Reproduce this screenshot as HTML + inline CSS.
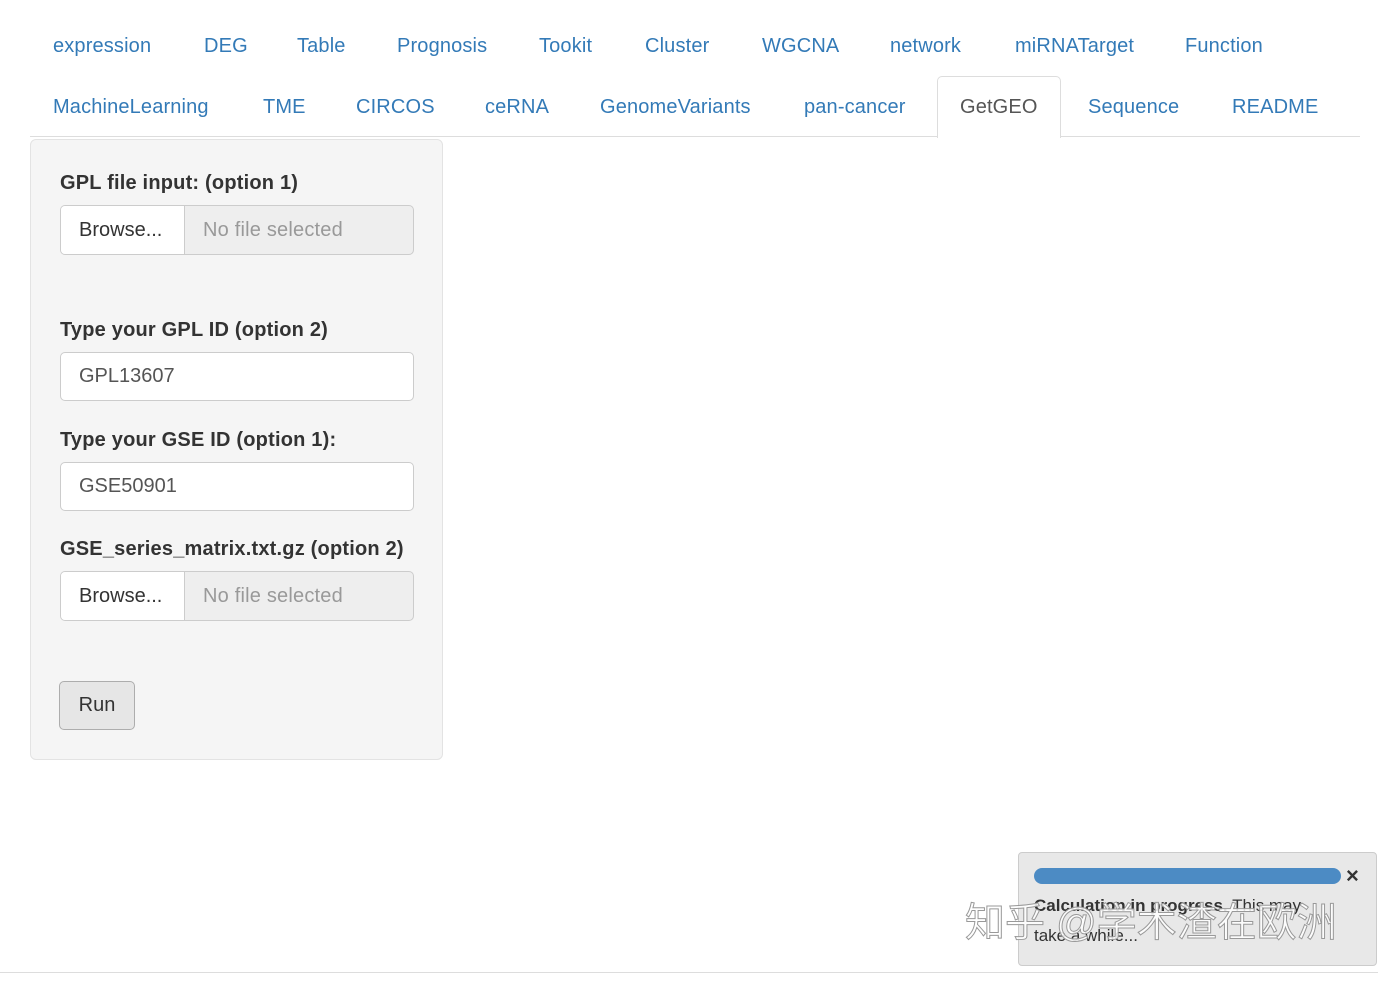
<!DOCTYPE html>
<html><head><meta charset="utf-8"><style>
body{margin:0;width:1378px;height:981px;background:#fff;font-family:"Liberation Sans",Arial,sans-serif;position:relative;overflow:hidden;color:#333}
.t{position:absolute;font-size:20px;color:#337ab7;line-height:24px;letter-spacing:0.15px}
.lab{position:absolute;left:60px;font-size:20px;font-weight:bold;color:#333;line-height:24px;letter-spacing:0.2px}
.inp{position:absolute;left:60px;width:354px;height:49px;border:1px solid #ccc;border-radius:5px;background:#fff;box-sizing:border-box;font-size:20px;line-height:47px;padding-left:18px;color:#555}
.file{position:absolute;left:60px;width:354px;height:50px;border:1px solid #ccc;border-radius:5px;box-sizing:border-box;overflow:hidden;background:#eee;font-size:20px}
.file .b{position:absolute;left:0;top:0;width:124px;height:48px;background:#fff;border-right:1px solid #ccc;line-height:48px;padding-left:18px;box-sizing:border-box;color:#333}
.file .n{position:absolute;left:142px;top:0;line-height:48px;color:#999;letter-spacing:0.2px}
</style></head><body>
<div class="t" style="left:53px;top:34px">expression</div>
<div class="t" style="left:204px;top:34px">DEG</div>
<div class="t" style="left:297px;top:34px">Table</div>
<div class="t" style="left:397px;top:34px">Prognosis</div>
<div class="t" style="left:539px;top:34px">Tookit</div>
<div class="t" style="left:645px;top:34px">Cluster</div>
<div class="t" style="left:762px;top:34px">WGCNA</div>
<div class="t" style="left:890px;top:34px">network</div>
<div class="t" style="left:1015px;top:34px">miRNATarget</div>
<div class="t" style="left:1185px;top:34px">Function</div>
<div style="position:absolute;left:30px;top:136px;width:1330px;height:1px;background:#ddd"></div>
<div style="position:absolute;left:937px;top:76px;width:124px;height:62px;background:#fff;border:1px solid #ddd;border-bottom:none;border-radius:5px 5px 0 0;box-sizing:border-box"></div>
<div class="t" style="left:53px;top:95px">MachineLearning</div>
<div class="t" style="left:263px;top:95px">TME</div>
<div class="t" style="left:356px;top:95px">CIRCOS</div>
<div class="t" style="left:485px;top:95px">ceRNA</div>
<div class="t" style="left:600px;top:95px">GenomeVariants</div>
<div class="t" style="left:804px;top:95px">pan-cancer</div>
<div class="t" style="left:960px;top:95px;color:#555">GetGEO</div>
<div class="t" style="left:1088px;top:95px">Sequence</div>
<div class="t" style="left:1232px;top:95px">README</div>

<div style="position:absolute;left:30px;top:139px;width:413px;height:621px;background:#f5f5f5;border:1px solid #e3e3e3;border-radius:6px;box-sizing:border-box"></div>
<div class="lab" style="top:171px">GPL file input: (option 1)</div>
<div class="file" style="top:205px"><div class="b">Browse...</div><div class="n">No file selected</div></div>
<div class="lab" style="top:318px">Type your GPL ID (option 2)</div>
<div class="inp" style="top:352px">GPL13607</div>
<div class="lab" style="top:428px">Type your GSE ID (option 1):</div>
<div class="inp" style="top:462px">GSE50901</div>
<div class="lab" style="top:537px">GSE_series_matrix.txt.gz (option 2)</div>
<div class="file" style="top:571px"><div class="b">Browse...</div><div class="n">No file selected</div></div>
<div style="position:absolute;left:59px;top:681px;width:76px;height:49px;background:#e6e6e6;border:1px solid #adadad;border-radius:5px;box-sizing:border-box;font-size:20px;line-height:47px;text-align:center;color:#333">Run</div>

<div style="position:absolute;left:0;top:972px;width:1378px;height:1px;background:#ddd"></div>
<div style="position:absolute;left:1018px;top:852px;width:359px;height:114px;background:#e8e8e8;border:1px solid #ccc;border-radius:4px;box-sizing:border-box"></div>
<div style="position:absolute;left:1034px;top:868px;width:307px;height:16px;background:#4c8bc4;border-radius:8px"></div>
<div style="position:absolute;left:1346px;top:863px;font-size:22px;font-weight:bold;color:#333">×</div>
<div style="position:absolute;left:1034px;top:896px;font-size:17px;color:#333"><b>Calculation in progress.</b> This may</div>
<div style="position:absolute;left:1034px;top:926px;font-size:17px;color:#333">take a while...</div>
<div style="position:absolute;left:965px;top:900px;font-size:40px;font-family:'Liberation Sans','Noto Sans CJK SC',sans-serif;color:rgba(255,255,255,0.85);-webkit-text-stroke:1px #999;line-height:46px">知乎 @学术渣在欧洲</div>
</body></html>
